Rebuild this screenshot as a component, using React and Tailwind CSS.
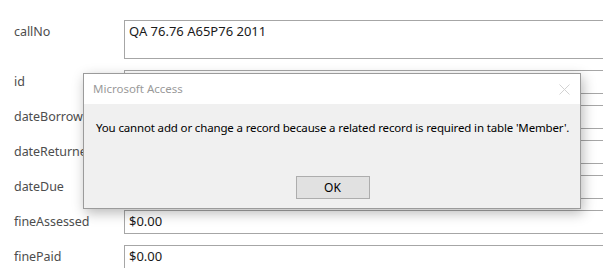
const fields = [
  { label: 'callNo', value: 'QA 76.76 A65P76 2011', tall: true },
  { label: 'id', value: '' },
  { label: 'dateBorrowed', value: '' },
  { label: 'dateReturned', value: '' },
  { label: 'dateDue', value: '' },
  { label: 'fineAssessed', value: '$0.00' },
  { label: 'finePaid', value: '$0.00' },
];

const font = { fontFamily: '"Noto Sans", "Open Sans", sans-serif' };

function Row({ label, value, tall }) {
  return (
    <div className="flex items-start">
      <div className="w-[124px] shrink-0 pl-[14px] h-[23px] leading-[23px] text-[12.5px] tracking-[-0.05px] text-[#4d4d4d] whitespace-nowrap overflow-hidden">
        {label}
      </div>
      <div
        className={`flex-1 -mr-[20px] border border-[#a6a6a6] bg-white pl-[4px] text-[13px] text-[#1a1a1a] ${
          tall ? 'h-[39px] leading-[21px]' : 'h-[24px] leading-[21px]'
        }`}
      >
        {value}
      </div>
    </div>
  );
}

export default function App() {
  return (
    <div className="relative w-[603px] h-[268px] overflow-hidden bg-white" style={font}>
      <div className="flex flex-col gap-[11px] pt-[20px]">
        {fields.map((f) => (
          <Row key={f.label} {...f} />
        ))}
      </div>

      {/* modal */}
      <div className="absolute left-[83px] top-[73px] w-[498px] h-[136px] border border-[#9b9b9b] bg-[#f0f0f0] shadow-[2px_4px_12px_rgba(0,0,0,0.28)] flex flex-col">
        <div className="h-[30px] bg-white flex items-center justify-between pl-[9px] pr-[9px]">
          <span className="text-[11.5px] text-[#9a9a9a]">Microsoft Access</span>
          <svg width="11" height="11" viewBox="0 0 11 11" className="mr-[1px]">
            <path d="M0.5 0.5 L10.5 10.5 M10.5 0.5 L0.5 10.5" stroke="#d2d2d2" strokeWidth="1" />
          </svg>
        </div>
        <div className="flex-1 flex flex-col">
          <p className="pl-[12px] pt-[16px] text-[11.5px] tracking-[-0.15px] text-black leading-[16px] whitespace-nowrap">
            You cannot add or change a record because a related record is required in table 'Member'.
          </p>
          <div className="mt-auto mb-[9px] flex justify-center pl-[1px]">
            <button className="w-[74px] h-[23px] border border-[#adadad] bg-[#e1e1e1] text-[12px] text-black">
              OK
            </button>
          </div>
        </div>
      </div>
    </div>
  );
}
